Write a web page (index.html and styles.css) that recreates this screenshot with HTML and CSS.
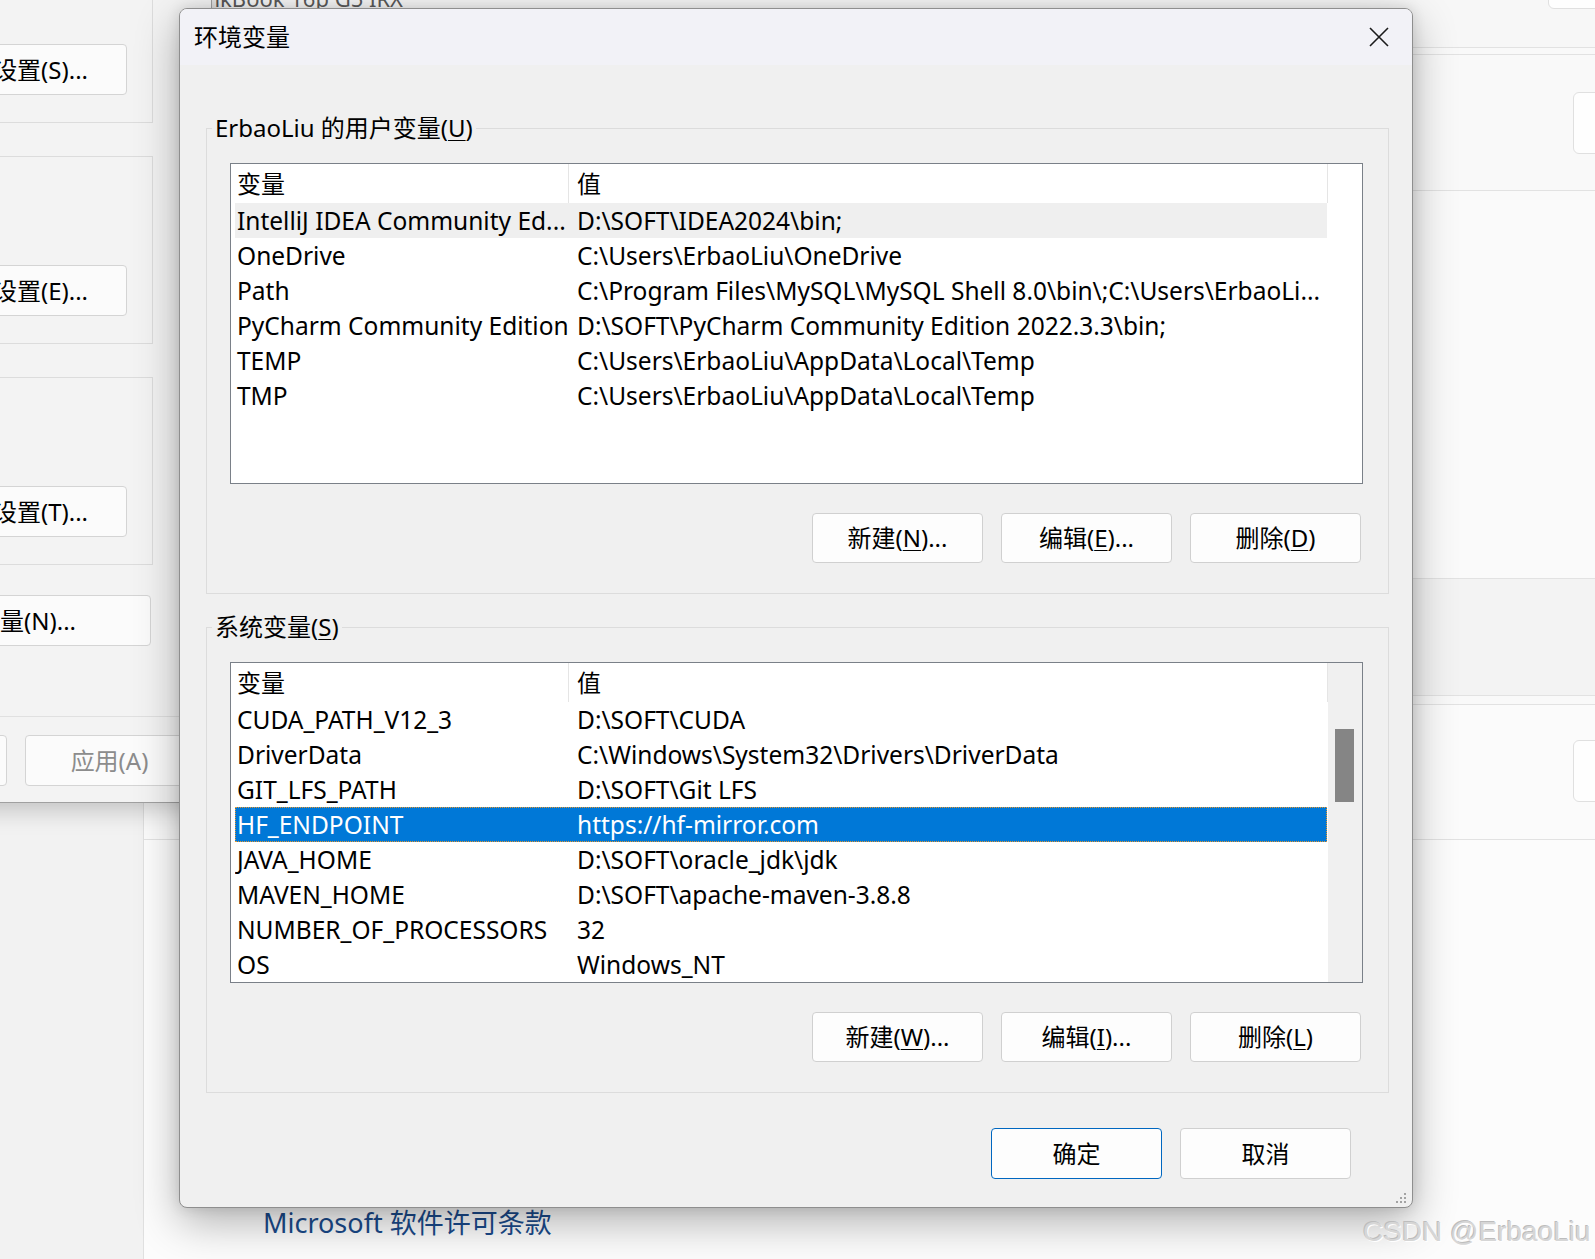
FILE: index.html
```html
<!DOCTYPE html>
<html lang="zh-CN">
<head>
<meta charset="utf-8">
<title>环境变量</title>
<link rel="stylesheet" href="styles.css">
</head>
<body>
<div class="settings">
  <div class="nav"></div>
  <div class="pane">
    <div class="blk blk-a">
      <div class="devname">ThinkBook 16p G5 IRX</div>
      <div class="pill pill-top"></div>
    </div>
    <div class="blk blk-b"><div class="pill"></div></div>
    <div class="blk blk-c"></div>
    <div class="blk blk-d"></div>
    <div class="blk blk-e"><div class="pill"></div></div>
    <div class="blk blk-f"><span class="mslink">Microsoft 软件许可条款</span></div>
  </div>
</div>

<div class="lw">
  <div class="lw-panel p1"><div class="lw-btn">设置(S)...</div></div>
  <div class="lw-panel p2"><div class="lw-btn">设置(E)...</div></div>
  <div class="lw-panel p2"><div class="lw-btn">设置(T)...</div></div>
  <div class="lw-btn lw-btn-n">量(N)...</div>
  <div class="lw-foot">
    <div class="lw-btn lw-btn-ok"></div>
    <div class="lw-btn lw-btn-apply">应用(A)</div>
  </div>
</div>

<div class="dialog">
  <div class="titlebar">
    <div class="title">环境变量</div>
    <svg class="close" width="20" height="20" viewBox="0 0 20 20"><path d="M1 1L19 19M19 1L1 19" stroke="#1b1b1b" stroke-width="1.6" fill="none"/></svg>
  </div>
  <div class="dbody">
    <div class="group">
      <div class="glabel">ErbaoLiu 的用户变量(<u>U</u>)</div>
      <div class="lv">
        <div class="lv-main">
          <div class="lv-head"><div class="hc hc1">变量</div><div class="hc hc2">值</div></div>
          <div class="lv-rows">
            <div class="row hover"><span class="c1">IntelliJ IDEA Community Ed...</span><span class="c2">D:\SOFT\IDEA2024\bin;</span></div>
            <div class="row"><span class="c1">OneDrive</span><span class="c2">C:\Users\ErbaoLiu\OneDrive</span></div>
            <div class="row"><span class="c1">Path</span><span class="c2">C:\Program Files\MySQL\MySQL Shell 8.0\bin\;C:\Users\ErbaoLi...</span></div>
            <div class="row"><span class="c1">PyCharm Community Edition</span><span class="c2">D:\SOFT\PyCharm Community Edition 2022.3.3\bin;</span></div>
            <div class="row"><span class="c1">TEMP</span><span class="c2">C:\Users\ErbaoLiu\AppData\Local\Temp</span></div>
            <div class="row"><span class="c1">TMP</span><span class="c2">C:\Users\ErbaoLiu\AppData\Local\Temp</span></div>
          </div>
        </div>
      </div>
      <div class="btnrow">
        <div class="btn">新建(<u>N</u>)...</div>
        <div class="btn">编辑(<u>E</u>)...</div>
        <div class="btn">删除(<u>D</u>)</div>
      </div>
    </div>

    <div class="group g2">
      <div class="glabel">系统变量(<u>S</u>)</div>
      <div class="lv">
        <div class="lv-main narrow">
          <div class="lv-head"><div class="hc hc1">变量</div><div class="hc hc2">值</div></div>
          <div class="lv-rows">
            <div class="row"><span class="c1">CUDA_PATH_V12_3</span><span class="c2">D:\SOFT\CUDA</span></div>
            <div class="row"><span class="c1">DriverData</span><span class="c2">C:\Windows\System32\Drivers\DriverData</span></div>
            <div class="row"><span class="c1">GIT_LFS_PATH</span><span class="c2">D:\SOFT\Git LFS</span></div>
            <div class="row sel"><span class="c1">HF_ENDPOINT</span><span class="c2">https://hf-mirror.com</span></div>
            <div class="row"><span class="c1">JAVA_HOME</span><span class="c2">D:\SOFT\oracle_jdk\jdk</span></div>
            <div class="row"><span class="c1">MAVEN_HOME</span><span class="c2">D:\SOFT\apache-maven-3.8.8</span></div>
            <div class="row"><span class="c1">NUMBER_OF_PROCESSORS</span><span class="c2">32</span></div>
            <div class="row"><span class="c1">OS</span><span class="c2">Windows_NT</span></div>
          </div>
        </div>
        <div class="sb"><div class="thumb"></div></div>
      </div>
      <div class="btnrow">
        <div class="btn">新建(<u>W</u>)...</div>
        <div class="btn">编辑(<u>I</u>)...</div>
        <div class="btn">删除(<u>L</u>)</div>
      </div>
    </div>

    <div class="dfoot">
      <div class="btn default">确定</div>
      <div class="btn">取消</div>
    </div>
  </div>
  <svg class="grip" width="12" height="12" viewBox="0 0 12 12">
    <g fill="#a3a3a3"><rect x="9" y="1" width="2" height="2"/><rect x="5" y="5" width="2" height="2"/><rect x="9" y="5" width="2" height="2"/><rect x="1" y="9" width="2" height="2"/><rect x="5" y="9" width="2" height="2"/><rect x="9" y="9" width="2" height="2"/></g>
  </svg>
</div>

<div class="watermark">CSDN @ErbaoLiu</div>
</body>
</html>
```

FILE: styles.css
```css
html, body {
  margin: 0;
  padding: 0;
}
body {
  width: 1595px;
  height: 1259px;
  overflow: hidden;
  position: relative;
  background: #f5f5f5;
  font-family: "Noto Sans", "Noto Sans CJK SC", sans-serif;
  color: #000;
}

/* ---------- settings window behind ---------- */
.settings {
  position: absolute;
  inset: 0;
  display: flex;
}
.nav {
  width: 143px;
  background: #f2f2f2;
}
.pane {
  flex: 1;
  display: flex;
  flex-direction: column;
  border-left: 1px solid #e0e0e0;
  background: #f9f9f9;
}
.blk {
  box-sizing: border-box;
  flex: none;
}
.blk-a {
  height: 48px;
  border-bottom: 1px solid #e2e2e2;
  background: #f7f7f7;
  display: flex;
  justify-content: space-between;
  align-items: flex-start;
}
.devname {
  font-size: 22px;
  line-height: 22px;
  color: #5a5a5a;
  margin: -13px 0 0 31px;
  white-space: nowrap;
}
.pill {
  width: 62px;
  height: 62px;
  margin: 37px -40px 0 0;
  background: #fefefe;
  border: 1px solid #e0e0e0;
  border-radius: 6px;
  box-sizing: border-box;
}
.pill-top {
  width: 80px;
  height: 40px;
  margin: -31px -33px 0 0;
}
.blk-b {
  margin-top: 6px;
  height: 137px;
  border-top: 1px solid #e2e2e2;
  border-bottom: 1px solid #e2e2e2;
  background: #f9f9f9;
  display: flex;
  justify-content: flex-end;
  align-items: flex-start;
}
.blk-c {
  height: 388px;
  border-bottom: 1px solid #e2e2e2;
  background: #fafafa;
}
.blk-d {
  height: 117px;
  border-bottom: 1px solid #e2e2e2;
  background: #f3f3f3;
}
.blk-e {
  margin-top: 8px;
  height: 136px;
  border-top: 1px solid #e2e2e2;
  border-bottom: 1px solid #e2e2e2;
  background: #fbfbfb;
  display: flex;
  justify-content: flex-end;
  align-items: flex-start;
}
.blk-e .pill {
  margin-top: 35px;
}
.blk-f {
  flex: 1;
  background: #fcfcfc;
  padding: 365px 0 0 119px;
}
.mslink {
  font-size: 27px;
  line-height: 36px;
  color: #1a4a8a;
  white-space: nowrap;
}

/* ---------- left window (system properties) ---------- */
.lw {
  position: absolute;
  left: -40px;
  top: -20px;
  width: 252px;
  height: 823px;
  box-sizing: border-box;
  border: 1px solid #a0a0a0;
  background: #f3f3f3;
  box-shadow: 0 6px 24px rgba(0, 0, 0, 0.22);
  display: flex;
  flex-direction: column;
  padding-left: 9px;
}
.lw-panel {
  flex: none;
  width: 183px;
  box-sizing: border-box;
  border: 1px solid #dcdcdc;
}
.lw-panel.p1 {
  margin-top: 9px;
  height: 133px;
  padding-top: 53px;
}
.lw-panel.p2 {
  margin-top: 33px;
  height: 188px;
  padding-top: 108px;
}
.lw-btn {
  flex: none;
  box-sizing: border-box;
  width: 147px;
  height: 51px;
  margin-left: 9px;
  background: #fbfbfb;
  border: 1px solid #d4d4d4;
  border-radius: 4px;
  font-size: 24px;
  line-height: 49px;
  text-align: right;
  padding-right: 38px;
  white-space: nowrap;
}
.lw-btn-n {
  width: 171px;
  margin: 30px 0 0 10px;
  padding-right: 74px;
}
.lw-foot {
  flex: 1;
  margin: 70px 0 0 -9px;
  border-top: 1px solid #e0e0e0;
  padding-top: 18px;
  display: flex;
  gap: 18px;
  align-items: flex-start;
}
.lw-btn-ok {
  width: 46px;
  margin: 0;
  padding: 0;
}
.lw-btn-apply {
  width: 169px;
  margin: 0;
  padding: 0;
  text-align: center;
  color: #8c8c8c;
}

/* ---------- dialog ---------- */
.dialog {
  position: absolute;
  left: 179px;
  top: 8px;
  width: 1234px;
  height: 1200px;
  box-sizing: border-box;
  border: 1px solid #8e8e8e;
  border-radius: 8px;
  background: #f0f0f0;
  overflow: hidden;
  box-shadow: 0 14px 44px rgba(0, 0, 0, 0.3), 0 0 14px rgba(0, 0, 0, 0.12);
  font-size: 24px;
}
.titlebar {
  height: 56px;
  background: #f2f2f7;
  display: flex;
  align-items: center;
  justify-content: space-between;
  padding-left: 14px;
}
.title {
  font-size: 24px;
  line-height: 32px;
}
.close {
  margin-right: 23px;
  display: block;
}
.dbody {
  padding: 63px 23px 0 26px;
}
.group {
  border: 1px solid #dcdcdc;
  padding: 0 25px 30px 23px;
}
.group.g2 {
  margin-top: 33px;
}
.glabel {
  width: fit-content;
  margin: -17px 0 0 -18px;
  padding: 0 3px;
  background: #f0f0f0;
  line-height: 32px;
  white-space: nowrap;
}
.glabel u, .btn u {
  text-underline-offset: 3px;
  text-decoration-thickness: 1px;
}
.lv {
  margin-top: 19px;
  height: 321px;
  box-sizing: border-box;
  border: 1px solid #7a8088;
  background: #fff;
  display: flex;
  overflow: hidden;
}
.lv-main {
  flex: 1;
  min-width: 0;
}
.lv-main.narrow {
  flex: none;
  width: 1097px;
}
.lv-head {
  display: flex;
  height: 39px;
  line-height: 39px;
}
.hc {
  box-sizing: border-box;
  border-right: 1px solid #e5e5e5;
  white-space: nowrap;
}
.hc1 {
  width: 338px;
  padding-left: 6px;
}
.hc2 {
  width: 759px;
  padding-left: 8px;
}
.lv-rows {
  margin-left: 4px;
  width: 1092px;
}
.row {
  display: grid;
  grid-template-columns: 333px 759px;
  height: 35px;
  line-height: 35px;
  font-size: 24.5px;
  white-space: nowrap;
}
.row span {
  overflow: hidden;
}
.c1 {
  padding-left: 2px;
}
.c2 {
  padding-left: 9px;
}
.row.hover {
  background: #efefef;
}
.row.sel {
  background: #0078d7;
  color: #fff;
  outline: 1px dotted #e8962a;
  outline-offset: -1px;
}
.sb {
  flex: none;
  width: 34px;
  background: #f0f0f0;
}
.thumb {
  width: 19px;
  height: 73px;
  margin: 66px 0 0 7px;
  background: #858585;
}
.btnrow {
  display: flex;
  justify-content: flex-end;
  gap: 18px;
  margin-top: 29px;
  padding-right: 2px;
}
.btn {
  box-sizing: border-box;
  width: 171px;
  height: 50px;
  background: #fdfdfd;
  border: 1px solid #d0d0d0;
  border-radius: 4px;
  text-align: center;
  line-height: 48px;
  white-space: nowrap;
}
.btn.default {
  border-color: #0067c0;
}
.dfoot {
  display: flex;
  justify-content: flex-end;
  gap: 18px;
  margin-top: 35px;
  padding-right: 38px;
}
.dfoot .btn {
  height: 51px;
  line-height: 49px;
}
.grip {
  position: absolute;
  right: 5px;
  bottom: 3px;
}

/* ---------- watermark ---------- */
.watermark {
  position: absolute;
  left: 1363px;
  top: 1214px;
  font-family: "Liberation Sans", Arial, sans-serif;
  font-size: 28px;
  line-height: 36px;
  color: #d6d6d6;
  text-shadow: 1px 1px 0 #ffffff, -1px -1px 0 #bdbdbd;
  white-space: nowrap;
}
```
